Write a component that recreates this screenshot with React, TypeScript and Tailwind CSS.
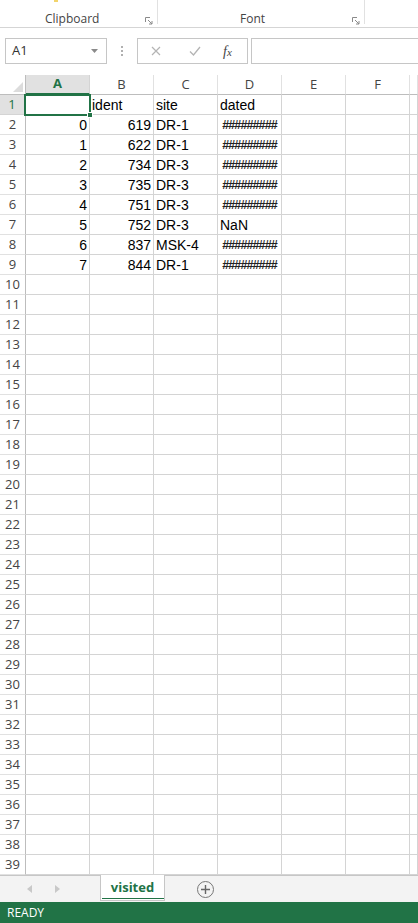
import React from "react";

const COLS = ["A", "B", "C", "D", "E", "F", ""];
const HASH = "#########";

// row index (1-based) -> cell values for A..D
const DATA: Record<number, { v: string; align: "l" | "r" | "c" }[]> = {
  1: [
    { v: "", align: "l" },
    { v: "ident", align: "l" },
    { v: "site", align: "l" },
    { v: "dated", align: "l" },
  ],
};

const rows = [
  ["0", "619", "DR-1", HASH],
  ["1", "622", "DR-1", HASH],
  ["2", "734", "DR-3", HASH],
  ["3", "735", "DR-3", HASH],
  ["4", "751", "DR-3", HASH],
  ["5", "752", "DR-3", "NaN"],
  ["6", "837", "MSK-4", HASH],
  ["7", "844", "DR-1", HASH],
];
rows.forEach((r, i) => {
  DATA[i + 2] = [
    { v: r[0], align: "r" },
    { v: r[1], align: "r" },
    { v: r[2], align: "l" },
    { v: r[3], align: r[3] === HASH ? "c" : "l" },
  ];
});

const uiFont = { fontFamily: '"Open Sans", "Noto Sans", sans-serif' };
const cellFont = { fontFamily: '"Liberation Sans", Arial, sans-serif' };

function Launcher() {
  return (
    <svg width="8" height="8" viewBox="0 0 8 8" className="text-[#8a8a8a]">
      <path d="M0.5 0.5H5M0.5 0.5V5" stroke="currentColor" strokeWidth="1" fill="none" />
      <path d="M3 3L7 7M7 4V7H4" stroke="currentColor" strokeWidth="1" fill="none" />
    </svg>
  );
}

function Ribbon() {
  return (
    <div className="flex h-[28px] border-b border-[#d5d5d5] bg-white text-[12px] leading-[12px] text-[#444]" style={uiFont}>
      <div className="relative flex w-[157px] items-end pb-[2px]">
        <div className="absolute left-[54px] top-0 h-[2px] w-[4px] bg-[#f2d46b]" />
        <span className="ml-[45px]">Clipboard</span>
        <span className="ml-auto mr-[4px]">
          <Launcher />
        </span>
      </div>
      <div className="h-[24px] w-px bg-[#e1e1e1]" />
      <div className="flex w-[206px] items-end pb-[2px]">
        <span className="ml-[82px]">Font</span>
        <span className="ml-auto mr-[4px]">
          <Launcher />
        </span>
      </div>
      <div className="h-[24px] w-px bg-[#e1e1e1]" />
    </div>
  );
}

function FormulaBar() {
  return (
    <div className="flex h-[47px] items-start bg-white pt-[10px] pl-[5px]" style={uiFont}>
      <div className="flex h-[26px] w-[102px] items-center border border-[#c6c6c6] pl-[6px] text-[13px] text-[#333]">
        <span>A1</span>
        <svg width="7" height="4" viewBox="0 0 7 4" className="ml-auto mr-[8px]">
          <path d="M0 0H7L3.5 4Z" fill="#8a8a8a" />
        </svg>
      </div>
      <div className="flex h-[26px] w-[30px] flex-col items-center justify-center gap-[2px]">
        <span className="h-[2px] w-[2px] bg-[#b0b0b0]" />
        <span className="h-[2px] w-[2px] bg-[#b0b0b0]" />
        <span className="h-[2px] w-[2px] bg-[#b0b0b0]" />
      </div>
      <div className="flex h-[26px] w-[111px] items-center border border-[#c6c6c6]">
        <svg width="10" height="10" viewBox="0 0 10 10" className="ml-[13px]">
          <path d="M1 1L9 9M9 1L1 9" stroke="#b4b4b4" strokeWidth="1.2" />
        </svg>
        <svg width="12" height="10" viewBox="0 0 12 10" className="ml-[28px]">
          <path d="M1 5.5L4.5 9L11 1" stroke="#b4b4b4" strokeWidth="1.3" fill="none" />
        </svg>
        <span
          className="ml-[22px] text-[14px] italic text-[#444]"
          style={{ fontFamily: '"Liberation Serif", serif' }}
        >
          f<span className="text-[11px]">x</span>
        </span>
      </div>
      <div className="ml-[3px] h-[26px] flex-1 border border-r-0 border-[#c6c6c6]" />
    </div>
  );
}

function Grid() {
  const rowNums = Array.from({ length: 39 }, (_, i) => i + 1);
  return (
    <div className="relative grid grid-cols-[26px_repeat(6,64px)_1fr] bg-white">
      {/* corner */}
      <div className="relative h-[20px] border-r border-b border-[#bdbdbd] bg-white">
        <svg width="10" height="10" viewBox="0 0 10 10" className="absolute right-[2px] bottom-[2px]">
          <path d="M10 0V10H0Z" fill="#dcdcdc" />
        </svg>
      </div>
      {COLS.map((c, i) => (
        <div
          key={"h" + i}
          className={
            i === 0
              ? "flex h-[20px] items-center justify-center border-r border-b-2 border-r-[#d4d4d4] border-b-[#217346] bg-[#e1e1e1] text-[13px] font-bold text-[#217346]"
              : "flex h-[20px] items-center justify-center border-r border-b border-r-[#e1e1e1] border-b-[#bdbdbd] bg-white text-[13px] text-[#444]"
          }
          style={uiFont}
        >
          {c}
        </div>
      ))}
      {rowNums.map((r) => (
        <React.Fragment key={r}>
          <div
            className={
              r === 1
                ? "flex h-[20px] items-center justify-center border-r-2 border-b border-r-[#217346] border-b-[#d4d4d4] bg-[#e1e1e1] text-[13px] text-[#217346]"
                : "flex h-[20px] items-center justify-center border-r border-b border-r-[#bdbdbd] border-b-[#e1e1e1] bg-white text-[13px] text-[#444]"
            }
            style={uiFont}
          >
            {r}
          </div>
          {COLS.map((_, ci) => {
            const cell = DATA[r]?.[ci];
            const align =
              cell?.align === "r" ? "justify-end pr-[2px]" : cell?.align === "c" ? "justify-center" : "justify-start pl-[2px]";
            return (
              <div
                key={ci}
                className={`flex h-[20px] items-center overflow-hidden whitespace-nowrap border-r border-b border-[#d4d4d4] pt-[1px] text-[14px] text-black ${align}`}
                style={cellFont}
              >
                {cell?.v === HASH ? (
                  <span className="text-[12.5px] font-bold tracking-[-0.9px] text-[#222]">{HASH}</span>
                ) : (
                  cell?.v
                )}
              </div>
            );
          })}
        </React.Fragment>
      ))}
      {/* selected cell A1 */}
      <div className="pointer-events-none absolute left-[24px] top-[19px] h-[22px] w-[67px] border-2 border-[#217346]" />
      <div className="pointer-events-none absolute left-[87px] top-[37px] h-[6px] w-[6px] border border-white bg-[#217346]" />
    </div>
  );
}

function Tabs() {
  return (
    <div className="flex h-[27px] items-start border-t border-[#c6c6c6] bg-[#f3f3f3]" style={uiFont}>
      <div className="flex h-[26px] w-[100px] items-center">
        <svg width="5" height="8" viewBox="0 0 5 8" className="ml-[27px]">
          <path d="M5 0V8L0 4Z" fill="#c8c8c8" />
        </svg>
        <svg width="5" height="8" viewBox="0 0 5 8" className="ml-[23px]">
          <path d="M0 0V8L5 4Z" fill="#c8c8c8" />
        </svg>
      </div>
      <div className="-mt-px flex h-[26px] w-[65px] flex-col items-center border-x border-b border-[#c6c6c6] bg-white">
        <span className="mt-[3px] text-[13px] font-bold text-[#217346]">visited</span>
        <div className="mt-auto mb-px h-[2px] w-[62px] bg-[#217346]" />
      </div>
      <div className="ml-[32px] mt-[5px] flex h-[17px] w-[17px] items-center justify-center rounded-full border border-[#777]">
        <svg width="9" height="9" viewBox="0 0 9 9">
          <path d="M4.5 0V9M0 4.5H9" stroke="#666" strokeWidth="1.4" />
        </svg>
      </div>
    </div>
  );
}

export default function App() {
  return (
    <div className="flex h-[923px] w-[418px] flex-col overflow-hidden bg-white">
      <Ribbon />
      <FormulaBar />
      <Grid />
      <Tabs />
      <div className="flex flex-1 items-center bg-[#217346] pl-[7px] text-[12px] text-white" style={uiFont}>
        READY
      </div>
    </div>
  );
}
